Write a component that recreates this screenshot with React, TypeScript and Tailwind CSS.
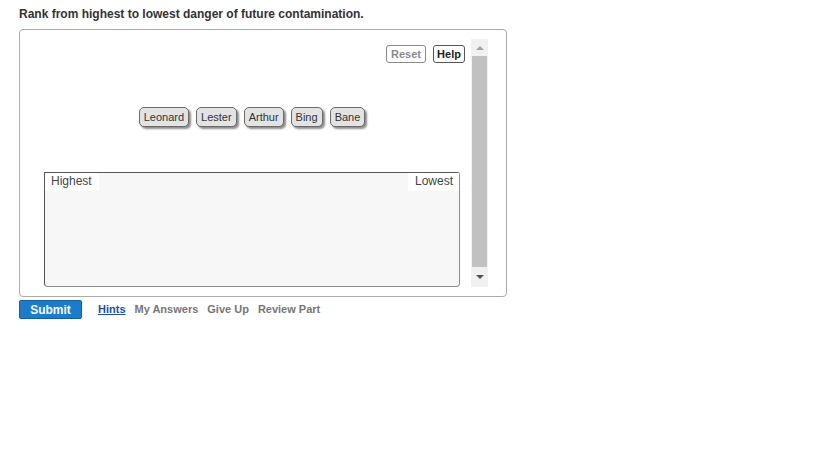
const ITEMS = ['Leonard', 'Lester', 'Arthur', 'Bing', 'Bane'];

const LINKS = ['My Answers', 'Give Up', 'Review Part'];

function Scrollbar() {
  return (
    <div className="w-[17px] bg-[#f1f1f1] flex flex-col items-stretch shrink-0">
      <div className="h-[17px] flex items-center justify-center">
        <div className="w-0 h-0 border-l-[4px] border-r-[4px] border-b-[4px] border-l-transparent border-r-transparent border-b-[#a3a3a3]" />
      </div>
      <div className="flex-1 mx-[1px] bg-[#c1c1c1]" />
      <div className="h-[20px] flex items-center justify-center">
        <div className="w-0 h-0 border-l-[4px] border-r-[4px] border-t-[4px] border-l-transparent border-r-transparent border-t-[#505050]" />
      </div>
    </div>
  );
}

export default function App() {
  return (
    <div className="min-h-screen bg-white pt-[6px] pl-[19px] font-['Liberation_Sans',Arial,sans-serif] text-[#333]">
      <p className="text-[12px] font-bold leading-[16px]">
        Rank from highest to lowest danger of future contamination.
      </p>

      <div className="mt-[7px] w-[488px] h-[268px] border border-[#ababab] rounded-[4px] flex pt-[9px] pb-[9px] pr-[18px]">
        <div className="flex-1 flex flex-col">
          {/* toolbar */}
          <div className="flex justify-end gap-[7px] mt-[6px] pr-[6px]">
            <button className="h-[18px] w-[40px] border border-[#8a8a8a] rounded-[3px] bg-white text-[11px] leading-none text-[#8a8a8a] font-bold">
              Reset
            </button>
            <button className="h-[18px] w-[32px] border border-[#555] rounded-[3px] bg-white text-[11px] leading-none text-[#222] font-bold">
              Help
            </button>
          </div>

          {/* draggable items */}
          <div className="flex justify-center gap-[7px] mt-[44px] pl-[13px]">
            {ITEMS.map(name => (
              <div
                key={name}
                className="h-[20px] px-[4px] flex items-center border border-[#6b6b6b] rounded-[5px] bg-[#e3e3e3] shadow-[2px_2px_2px_rgba(0,0,0,0.45)] text-[11px] text-[#333]"
              >
                {name}
              </div>
            ))}
          </div>

          {/* ranking bin */}
          <div className="mt-[45px] ml-[24px] w-[416px] h-[116px] bg-[#f7f7f7] border-l border-t border-[#555] border-r border-b border-r-[#8c8c8c] border-b-[#8c8c8c] rounded-b-[4px] rounded-tr-[3px] flex justify-between items-start">
            <span className="bg-white pl-[6px] pr-[7px] h-[18px] leading-[16px] text-[12px] text-[#444]">Highest</span>
            <span className="bg-white pl-[7px] pr-[6px] h-[18px] leading-[16px] text-[12px] text-[#444]">Lowest</span>
          </div>
        </div>
        <Scrollbar />
      </div>

      <div className="mt-[3px] flex items-center">
        <button className="w-[63px] h-[19px] bg-[#1c7ccc] border border-[#14609f] rounded-[2px] text-white text-[12px] font-bold leading-none">
          Submit
        </button>
        <a className="ml-[16px] text-[11px] font-bold text-[#1b4fa3] underline">Hints</a>
        {LINKS.map(l => (
          <span key={l} className="ml-[9px] text-[11px] font-bold text-[#777]">
            {l}
          </span>
        ))}
      </div>
    </div>
  );
}
